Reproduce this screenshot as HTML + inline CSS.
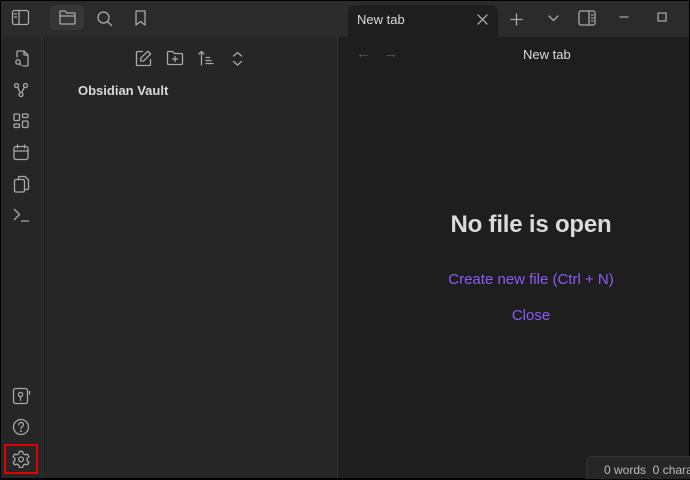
<!DOCTYPE html>
<html><head><style>
*{margin:0;padding:0;box-sizing:border-box}
body{width:690px;height:480px;background:#000;font-family:"Liberation Sans",sans-serif;overflow:hidden;position:relative}
.a{position:absolute}
svg{position:absolute;fill:none;stroke:#a8a8a8;stroke-width:1.3;stroke-linecap:round;stroke-linejoin:round}
</style></head><body>
<div class="a" style="left:1px;top:1px;width:688px;height:36px;background:#2b2b2b"></div>
<div class="a" style="left:1px;top:37px;width:41px;height:441px;background:#262626;border-right:1px solid #303030"></div>
<div class="a" style="left:42px;top:37px;width:296px;height:441px;background:#262626;border-right:1px solid #333"></div>
<div class="a" style="left:338px;top:37px;width:351px;height:441px;background:#1e1e1e"></div>
<div class="a" style="left:348px;top:5px;width:150px;height:33px;background:#1e1e1e;border-radius:7px 7px 0 0"></div>
<div class="a" style="left:50px;top:5px;width:34px;height:25px;background:#363636;border-radius:5px"></div>
<!-- top icons -->
<svg style="left:11px;top:9px" width="20" height="18"><rect x="1.5" y="1.5" width="16" height="14" rx="2"/><path d="M8 1.5v14M3.5 5h2M3.5 8h2"/></svg>
<svg style="left:58px;top:9px" width="20" height="17"><path d="M2 14V3a1 1 0 0 1 1-1h4l2 2h7a1 1 0 0 1 1 1v9a1 1 0 0 1-1 1H3a1 1 0 0 1-1-1zM2 7h15"/></svg>
<svg style="left:96px;top:10px" width="17" height="17"><circle cx="7.5" cy="7.5" r="5.5"/><path d="M11.5 11.5l4 4"/></svg>
<svg style="left:134px;top:10px" width="13" height="17"><path d="M2 1h9v14l-4.5-3.5L2 15z"/></svg>
<div class="a" style="left:357px;top:12px;color:#dadada;font-size:13px">New tab</div>
<svg style="left:477px;top:14px" width="11" height="11"><path d="M1 1l9 9M10 1L1 10"/></svg>
<svg style="left:510px;top:13px" width="13" height="13"><path d="M6.5 1v11M1 6.5h11"/></svg>
<svg style="left:548px;top:15px" width="11" height="7"><path d="M1 1l4.5 4.5L10 1"/></svg>
<svg style="left:578px;top:10px" width="19" height="17"><rect x="1" y="1" width="16" height="14" rx="2"/><path d="M11 1v14M13.5 5h1.5M13.5 8h1.5M13.5 11h1.5"/></svg>
<svg style="left:619px;top:16px" width="11" height="3"><path d="M1 1h8"/></svg>
<svg style="left:657px;top:12px" width="11" height="11"><rect x="1" y="1" width="8" height="8"/></svg>
<!-- nav -->
<div class="a" style="left:356px;top:45px;color:#555;font-size:15px">←&nbsp;&nbsp;&nbsp;→</div>
<div class="a" style="left:523px;top:47px;color:#dadada;font-size:13px">New tab</div>
<!-- ribbon icons -->
<svg style="left:13px;top:49px" width="17" height="19"><path d="M4 8V3a1 1 0 0 1 1-1h6l4 4v10a1 1 0 0 1-1 1H10M11 2v4h4"/><circle cx="5" cy="13" r="2.2"/><path d="M6.7 14.7l1.5 1.5"/></svg>
<svg style="left:13px;top:82px" width="16" height="16"><circle cx="3.5" cy="3.5" r="2"/><circle cx="12.5" cy="3.5" r="2"/><circle cx="8" cy="12.5" r="2"/><path d="M4.7 5.3l2.5 5.2M11.3 5.3l-2.5 5.2"/></svg>
<svg style="left:13px;top:113px" width="16" height="16"><rect x="1" y="1" width="5.5" height="6.5" rx="1"/><rect x="9.5" y="1" width="5.5" height="3.5" rx="1"/><rect x="1" y="11" width="5.5" height="3.5" rx="1"/><rect x="9.5" y="8" width="5.5" height="6.5" rx="1"/></svg>
<svg style="left:13px;top:144px" width="16" height="17"><rect x="1" y="2.5" width="14" height="13" rx="2"/><path d="M1 7h14M4.5 1v3M11.5 1v3"/></svg>
<svg style="left:13px;top:175px" width="17" height="19"><path d="M5.5 4.5V2.5a1 1 0 0 1 1-1h5.5l3.5 3.5v8.5a1 1 0 0 1-1 1H12"/><rect x="1.5" y="4.5" width="10" height="12.5" rx="1.5"/></svg>
<svg style="left:13px;top:208px" width="17" height="15"><path d="M1.5 1.5l5 5-5 5M8.5 13h7"/></svg>
<svg style="left:12px;top:387px" width="19" height="19"><rect x="1.5" y="1.5" width="14" height="15" rx="2"/><circle cx="8.5" cy="7.5" r="2.1"/><path d="M8.5 9.8v3.5M17.5 4.5v2.5"/></svg>
<svg style="left:12px;top:418px" width="18" height="18"><circle cx="9" cy="9" r="7.5"/><path d="M6.8 6.8a2.3 2.3 0 1 1 2.8 2.2c-.5.2-.6.7-.6 1.5"/><circle cx="9" cy="13.2" r=".4"/></svg>
<div class="a" style="left:4px;top:444px;width:34px;height:30px;border:2px solid #e00000"></div>
<svg style="left:12px;top:450px" width="18" height="18"><path d="M7.5 1.3h3l.6 2.3 2 1.2 2.3-.7 1.5 2.6-1.8 1.6v2.3l1.8 1.6-1.5 2.6-2.3-.7-2 1.2-.6 2.3h-3l-.6-2.3-2-1.2-2.3.7-1.5-2.6 1.8-1.6V8.3L1.1 6.7l1.5-2.6 2.3.7 2-1.2z"/><circle cx="9" cy="9.4" r="2.4"/></svg>
<!-- sidebar icons -->
<svg style="left:135px;top:50px" width="17" height="17"><path d="M7.5 1.5H2.5a1 1 0 0 0-1 1v12a1 1 0 0 0 1 1h12a1 1 0 0 0 1-1v-5"/><path d="M12.8 1.2l2.8 2.8L8.5 11H5.7V8.2z"/></svg>
<svg style="left:166px;top:50px" width="19" height="17"><path d="M1.5 13.5V2.5a1 1 0 0 1 1-1h4l2 2h7a1 1 0 0 1 1 1v9a1 1 0 0 1-1 1h-13a1 1 0 0 1-1-1zM9 6.5v5M6.5 9h5"/></svg>
<svg style="left:198px;top:50px" width="17" height="17"><path d="M3.5 15V1.5M1 4l2.5-2.5L6 4M8 7.5h3.5M8 10.5h5M8 13.5h7"/></svg>
<svg style="left:232px;top:51px" width="11" height="15"><path d="M1.5 5l4-3.5 4 3.5M1.5 10.5l4 3.5 4-3.5"/></svg>
<div class="a" style="left:78px;top:83px;color:#dadada;font-size:13px;font-weight:bold">Obsidian Vault</div>
<!-- center -->
<div class="a" style="left:338px;top:211px;width:386px;text-align:center;color:#dadada;font-size:24px;font-weight:bold;letter-spacing:-0.2px">No file is open</div>
<div class="a" style="left:338px;top:271px;width:386px;text-align:center;color:#8a5cf5;font-size:15px">Create new file (Ctrl + N)</div>
<div class="a" style="left:338px;top:307px;width:386px;text-align:center;color:#8a5cf5;font-size:15px">Close</div>
<!-- status -->
<div class="a" style="left:586px;top:456px;width:104px;height:23px;background:#262626;border:1px solid #333;border-right:none;border-bottom:none;border-radius:6px 0 0 0"></div>
<div class="a" style="left:604px;top:463px;color:#bbb;font-size:12px;white-space:nowrap">0 words&nbsp; 0 chara</div>
</body></html>
